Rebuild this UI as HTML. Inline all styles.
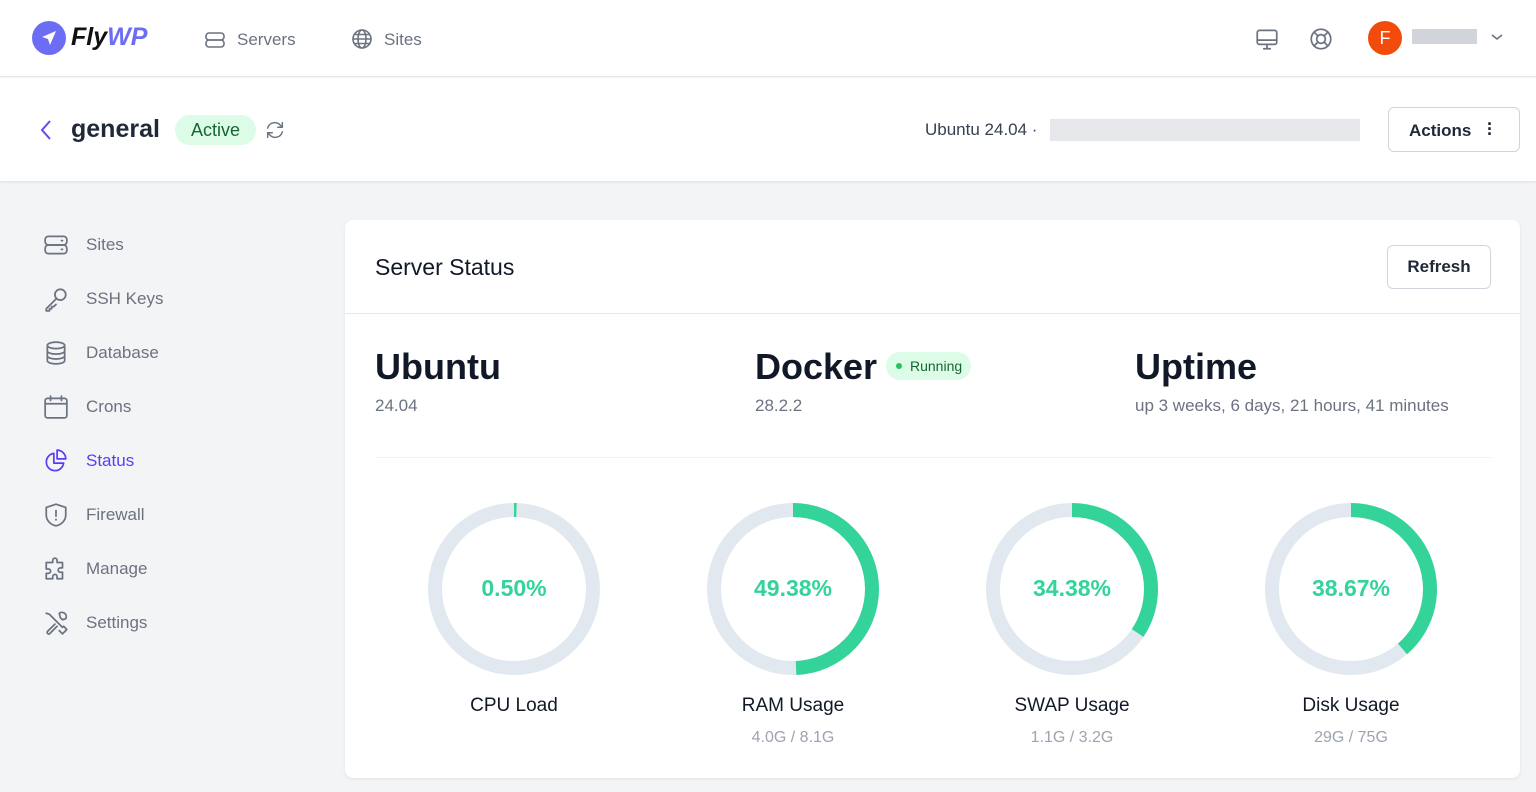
<!DOCTYPE html><html><head><style>
*{box-sizing:border-box;margin:0;padding:0}
body{width:1536px;height:792px;overflow:hidden;background:#f3f4f6;font-family:"Liberation Sans",sans-serif;position:relative;color:#111827}
.a{position:absolute}
.nav{color:#6b7280;font-size:17px}
.side{color:#6b7280;font-size:17px;left:86px}
.ic{left:43px;width:26px;height:26px;fill:none;stroke:#6b7280;stroke-width:1.6;stroke-linecap:round;stroke-linejoin:round}
.pct{font-size:23px;font-weight:bold;color:#34d399;width:200px;text-align:center}
.lbl{font-size:19px;color:#111827;width:200px;text-align:center}
.sub{font-size:16px;color:#9ca3af;width:200px;text-align:center}
</style></head><body>
<div class="a" style="left:0;top:0;width:1536px;height:77px;background:#fff;border-bottom:1px solid #e5e7eb"></div>
<div class="a" style="left:32px;top:21px;width:34px;height:34px;border-radius:50%;background:#6c6cf5"></div>
<svg class="a" style="left:39px;top:28px" width="20" height="20" viewBox="0 0 20 20"><path d="M3 9 L17 3 L11 17 L9 11 Z" fill="#fff"/></svg>
<div class="a" style="left:71px;top:23px;font-size:25px;font-weight:bold;font-style:italic;color:#111"><span>Fly</span><span style="color:#6c6cf5">WP</span></div>
<svg class="a ic" style="left:203px;top:28px;width:24px;height:24px" viewBox="0 0 24 24"><rect x="3" y="5" width="18" height="7" rx="3"/><rect x="3" y="12" width="18" height="7" rx="3"/></svg>
<div class="a nav" style="left:237px;top:30px">Servers</div>
<svg class="a ic" style="left:350px;top:27px;width:24px;height:24px" viewBox="0 0 24 24"><circle cx="12" cy="12" r="9"/><ellipse cx="12" cy="12" rx="4" ry="9"/><path d="M3 12h18M4.5 7.5h15M4.5 16.5h15"/></svg>
<div class="a nav" style="left:384px;top:30px">Sites</div>
<svg class="a ic" style="left:1254px;top:26px" viewBox="0 0 24 24"><rect x="3" y="4" width="18" height="13" rx="2"/><path d="M3 13h18M9 21h6M12 17v4"/></svg>
<svg class="a ic" style="left:1308px;top:26px" viewBox="0 0 24 24"><circle cx="12" cy="12" r="9"/><circle cx="12" cy="12" r="4"/><path d="M5.6 5.6l3.6 3.6M18.4 5.6l-3.6 3.6M5.6 18.4l3.6-3.6M18.4 18.4l-3.6-3.6"/></svg>
<div class="a" style="left:1368px;top:21px;width:34px;height:34px;border-radius:50%;background:#f24c0c;color:#fff;font-size:18px;text-align:center;line-height:34px">F</div>
<div class="a" style="left:1412px;top:29px;width:65px;height:15px;background:#d1d5db"></div>
<svg class="a" style="left:1490px;top:32px" width="14" height="10" viewBox="0 0 14 10"><path d="M2 3l5 4 5-4" fill="none" stroke="#6b7280" stroke-width="1.6"/></svg>

<div class="a" style="left:0;top:78px;width:1536px;height:104px;background:#fff;border-bottom:1px solid #e5e7eb;box-shadow:0 1px 2px rgba(0,0,0,.05)"></div>
<svg class="a" style="left:38px;top:118px" width="16" height="24" viewBox="0 0 16 24"><path d="M12 3L4 12l8 9" fill="none" stroke="#5b4cf5" stroke-width="2"/></svg>
<div class="a" style="left:71px;top:115px;font-size:25px;font-weight:bold;color:#1f2937">general</div>
<div class="a" style="left:175px;top:115px;width:81px;height:30px;border-radius:15px;background:#dcfce7;color:#166534;font-size:18px;text-align:center;line-height:30px">Active</div>
<svg class="a ic" style="left:264px;top:119px;width:22px;height:22px" viewBox="0 0 24 24"><path d="M4 10a8 8 0 0 1 14-3l2 2M20 14a8 8 0 0 1-14 3l-2-2M20 4v5h-5M4 20v-5h5"/></svg>
<div class="a" style="left:925px;top:120px;font-size:17px;color:#374151">Ubuntu 24.04 ·</div>
<div class="a" style="left:1050px;top:119px;width:310px;height:22px;background:#e5e7eb"></div>
<div class="a" style="left:1388px;top:107px;width:132px;height:45px;border:1px solid #d1d5db;border-radius:6px;background:#fff;font-size:17px;font-weight:bold;color:#1f2937;padding:13px 0 0 20px">Actions</div>
<div class="a" style="left:1487px;top:122px;font-size:18px;font-weight:bold;line-height:5px;color:#1f2937">·<br>·<br>·</div>

<svg class="a ic" style="top:232px" viewBox="0 0 24 24"><rect x="2" y="4" width="20" height="8" rx="3"/><rect x="2" y="12" width="20" height="8" rx="3"/><path d="M17 8h1M17 16h1"/></svg>
<div class="a side" style="top:235px">Sites</div>
<svg class="a ic" style="top:286px" viewBox="0 0 24 24"><circle cx="16" cy="8" r="5"/><path d="M12.5 11.5L3 21v2h3v-2h2v-2h2l2-2"/></svg>
<div class="a side" style="top:289px">SSH Keys</div>
<svg class="a ic" style="top:340px" viewBox="0 0 24 24"><ellipse cx="12" cy="5" rx="8" ry="3"/><path d="M4 5v14c0 1.7 3.6 3 8 3s8-1.3 8-3V5M4 10c0 1.7 3.6 3 8 3s8-1.3 8-3M4 14.5c0 1.7 3.6 3 8 3s8-1.3 8-3"/></svg>
<div class="a side" style="top:343px">Database</div>
<svg class="a ic" style="top:394px" viewBox="0 0 24 24"><rect x="2" y="4" width="20" height="18" rx="2"/><path d="M2 9h20M7 2v4M17 2v4"/></svg>
<div class="a side" style="top:397px">Crons</div>
<svg class="a ic" style="top:448px;stroke:#5b3cf5" viewBox="0 0 24 24"><path d="M10 5a8 8 0 1 0 9 9h-9z"/><path d="M13 2a8 8 0 0 1 8 8h-8z"/></svg>
<div class="a side" style="top:451px;color:#5b3cf5">Status</div>
<svg class="a ic" style="top:502px" viewBox="0 0 24 24"><path d="M12 2l9 3v7c0 5-4 9-9 10-5-1-9-5-9-10V5z"/><path d="M12 8v5M12 16v.5"/></svg>
<div class="a side" style="top:505px">Firewall</div>
<svg class="a ic" style="top:556px" viewBox="0 0 24 24"><path d="M9 4a2 2 0 0 1 4 0v2h5v5h-2a2 2 0 0 0 0 4h2v6h-5v-2a2 2 0 0 0-4 0v2H3v-5h2a2 2 0 0 0 0-4H3V6h6z"/></svg>
<div class="a side" style="top:559px">Manage</div>
<svg class="a ic" style="top:610px" viewBox="0 0 24 24"><path d="M3 3l3 1 12 12M15 19l3 3 4-4-3-3M15 3a4 4 0 0 1 6 5l-3 1-2-2zM11 13l-7 7a1.5 1.5 0 0 0 2 2l7-7"/></svg>
<div class="a side" style="top:613px">Settings</div>

<div class="a" style="left:345px;top:220px;width:1175px;height:558px;background:#fff;border-radius:8px;box-shadow:0 1px 3px rgba(0,0,0,.08)"></div>
<div class="a" style="left:345px;top:313px;width:1175px;height:1px;background:#e5e7eb"></div>
<div class="a" style="left:375px;top:254px;font-size:23px;color:#111827">Server Status</div>
<div class="a" style="left:1387px;top:245px;width:104px;height:44px;border:1px solid #d1d5db;border-radius:6px;font-size:17px;font-weight:bold;color:#1f2937;text-align:center;line-height:42px">Refresh</div>
<div class="a" style="left:375px;top:346px;font-size:36px;font-weight:bold">Ubuntu</div>
<div class="a" style="left:375px;top:396px;font-size:17px;color:#6b7280">24.04</div>
<div class="a" style="left:755px;top:346px;font-size:36px;font-weight:bold">Docker</div>
<div class="a" style="left:886px;top:352px;width:85px;height:28px;border-radius:14px;background:#dcfce7;color:#166534;font-size:14px;line-height:28px;padding-left:24px">Running</div>
<div class="a" style="left:896px;top:363px;width:6px;height:6px;border-radius:50%;background:#22c55e"></div>
<div class="a" style="left:755px;top:396px;font-size:17px;color:#6b7280">28.2.2</div>
<div class="a" style="left:1135px;top:346px;font-size:36px;font-weight:bold">Uptime</div>
<div class="a" style="left:1135px;top:396px;font-size:17px;color:#6b7280">up 3 weeks, 6 days, 21 hours, 41 minutes</div>
<div class="a" style="left:375px;top:457px;width:1116px;height:1px;background:#f1f1f3"></div>

<svg class="a" style="left:0;top:0" width="1536" height="792">
<g fill="none" stroke-width="14">
<circle cx="514" cy="589" r="79" stroke="#e2e8f0"/><circle cx="514" cy="589" r="79" stroke="#34d399" stroke-dasharray="2.5 500" transform="rotate(-90 514 589)"/>
<circle cx="793" cy="589" r="79" stroke="#e2e8f0"/><circle cx="793" cy="589" r="79" stroke="#34d399" stroke-dasharray="245 500" transform="rotate(-90 793 589)"/>
<circle cx="1072" cy="589" r="79" stroke="#e2e8f0"/><circle cx="1072" cy="589" r="79" stroke="#34d399" stroke-dasharray="170.7 500" transform="rotate(-90 1072 589)"/>
<circle cx="1351" cy="589" r="79" stroke="#e2e8f0"/><circle cx="1351" cy="589" r="79" stroke="#34d399" stroke-dasharray="192 500" transform="rotate(-90 1351 589)"/>
</g></svg>
<div class="a pct" style="left:414px;top:575px">0.50%</div>
<div class="a pct" style="left:693px;top:575px">49.38%</div>
<div class="a pct" style="left:972px;top:575px">34.38%</div>
<div class="a pct" style="left:1251px;top:575px">38.67%</div>
<div class="a lbl" style="left:414px;top:695px">CPU Load</div>
<div class="a lbl" style="left:693px;top:695px">RAM Usage</div>
<div class="a lbl" style="left:972px;top:695px">SWAP Usage</div>
<div class="a lbl" style="left:1251px;top:695px">Disk Usage</div>
<div class="a sub" style="left:693px;top:729px">4.0G / 8.1G</div>
<div class="a sub" style="left:972px;top:729px">1.1G / 3.2G</div>
<div class="a sub" style="left:1251px;top:729px">29G / 75G</div>
</body></html>
